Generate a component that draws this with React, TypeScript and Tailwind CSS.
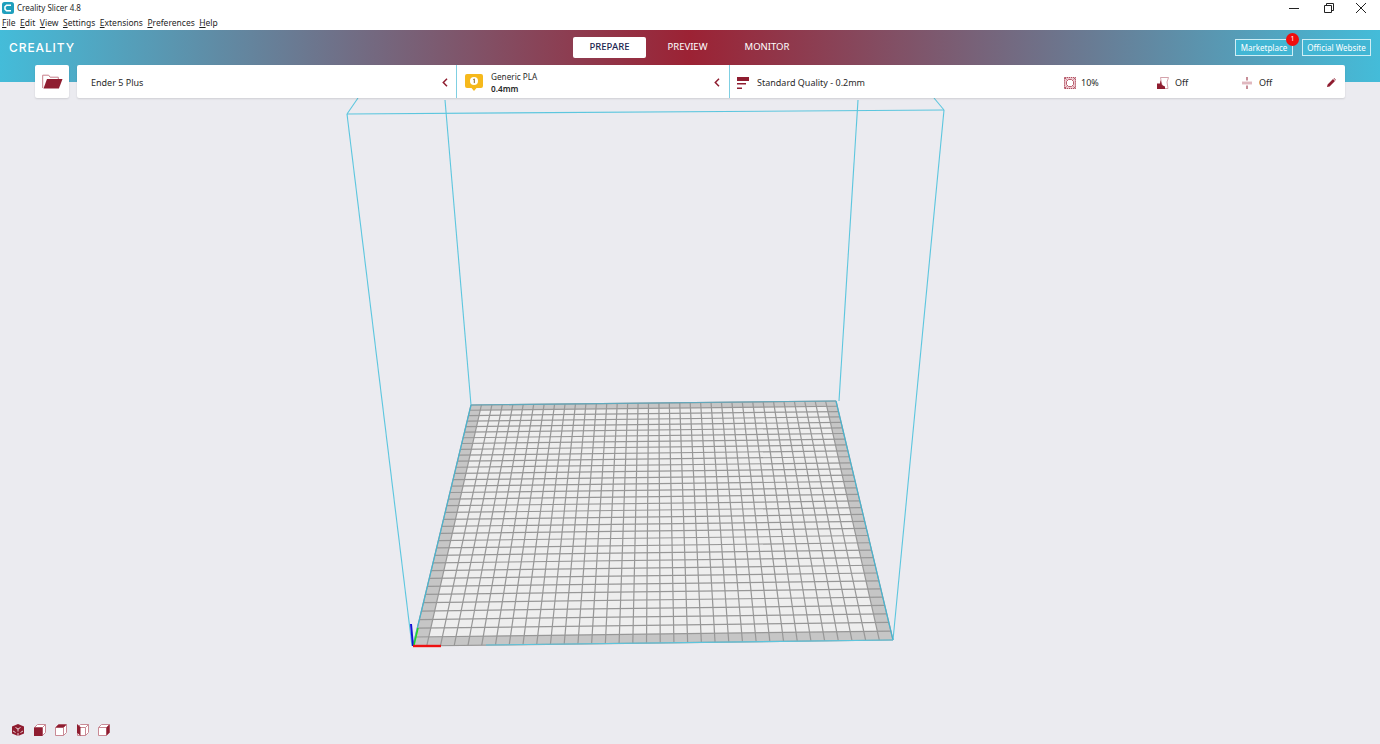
import { Fragment } from 'react'

const ACCENT = '#8f1d30'
const WIRE = '#5cc6de'

type Pt = [number, number]

// projective map of the unit square on to the build plate
const corners: Pt[] = [[471, 405], [836, 401], [893, 640], [413, 646]]

function plateMap([p0, p1, p2, p3]: Pt[]) {
  const dx1 = p1[0] - p2[0]
  const dx2 = p3[0] - p2[0]
  const dx3 = p0[0] - p1[0] + p2[0] - p3[0]
  const dy1 = p1[1] - p2[1]
  const dy2 = p3[1] - p2[1]
  const dy3 = p0[1] - p1[1] + p2[1] - p3[1]
  const det = dx1 * dy2 - dx2 * dy1
  const g = (dx3 * dy2 - dx2 * dy3) / det
  const h = (dx1 * dy3 - dx3 * dy1) / det
  const a = p1[0] - p0[0] + g * p1[0]
  const b = p3[0] - p0[0] + h * p3[0]
  const d = p1[1] - p0[1] + g * p1[1]
  const e = p3[1] - p0[1] + h * p3[1]
  return (u: number, v: number): Pt => {
    const w = g * u + h * v + 1
    return [(a * u + b * v + p0[0]) / w, (d * u + e * v + p0[1]) / w]
  }
}

const N = 35
const at = plateMap(corners)
const poly = (pts: Pt[]) => pts.map((p) => p.join(',')).join(' ')

function BuildVolume() {
  const s = 1 / N
  const inner = [at(s, s), at(1 - s, s), at(1 - s, 1 - s), at(s, 1 - s)]
  const ticks = Array.from({ length: N + 1 }, (_, i) => i / N)
  return (
    <svg className="absolute left-0 top-0" width="1380" height="744" viewBox="0 0 1380 744">
      <polygon points={poly(corners)} fill="#c6c6c6" />
      <polygon points={poly(inner)} fill="#eeeeee" />
      {ticks.map((t, i) => {
        const a = at(t, 0)
        const b = at(t, 1)
        const c = at(0, t)
        const d = at(1, t)
        return (
          <Fragment key={i}>
            <line x1={a[0]} y1={a[1]} x2={b[0]} y2={b[1]} stroke="#979797" strokeWidth="1.2" />
            <line x1={c[0]} y1={c[1]} x2={d[0]} y2={d[1]} stroke="#979797" strokeWidth="1.2" />
          </Fragment>
        )
      })}
      {/* wireframe */}
      <g stroke={WIRE} strokeWidth="1.1" fill="none">
        <line x1="412" y1="646" x2="347" y2="114" />
        <line x1="893" y1="640" x2="944" y2="110" />
        <line x1="471" y1="405" x2="445" y2="100" />
        <line x1="839" y1="401" x2="858" y2="100" />
        <line x1="347" y1="114" x2="944" y2="110" />
        <line x1="347" y1="114" x2="358" y2="98" />
        <line x1="944" y1="110" x2="934" y2="98" />
        <line x1="413" y1="646" x2="471" y2="405" stroke="#45b6d2" />
        <line x1="893" y1="640" x2="836" y2="401" stroke="#45b6d2" />
        <line x1="471" y1="405" x2="836" y2="401" stroke="#5fa9bd" />
        <line x1="486" y1="645" x2="893" y2="640" stroke="#5cc5dd" />
      </g>
      {/* axes */}
      <line x1="413" y1="646" x2="411" y2="624" stroke="#1414d8" strokeWidth="2" />
      <line x1="414" y1="645" x2="418" y2="628" stroke="#22d822" strokeWidth="1.5" />
      <line x1="413" y1="646" x2="441" y2="646" stroke="#ee1111" strokeWidth="2.4" />
    </svg>
  )
}

function AppIcon() {
  return (
    <svg width="12" height="12" viewBox="0 0 12 12">
      <rect width="12" height="12" rx="2.5" fill="#1f9fbd" />
      <path d="M9 3.2H4.6L3 4.8v2.4l1.6 1.6H9" fill="none" stroke="#fff" strokeWidth="1.6" />
    </svg>
  )
}

function WindowControls() {
  return (
    <div className="flex items-center">
      <svg width="12" height="12" viewBox="0 0 12 12" className="mr-[23px]">
        <path d="M1 6.5h10" stroke="#222" />
      </svg>
      <svg width="12" height="12" viewBox="0 0 12 12" className="mr-[20px]">
        <path d="M3.5 3V1.5h7v7H9M1.5 3.5h7v7h-7z" fill="none" stroke="#222" />
      </svg>
      <svg width="12" height="12" viewBox="0 0 12 12" className="mr-[13px]">
        <path d="M1 1l10 10M11 1L1 11" stroke="#222" />
      </svg>
    </div>
  )
}

function MenuItem({ first, rest }: { first: string; rest: string }) {
  return (
    <span>
      <span className="underline">{first}</span>
      {rest}
    </span>
  )
}

function Chevron() {
  return (
    <svg width="6" height="9" viewBox="0 0 6 9">
      <path d="M5 .8L1.3 4.5 5 8.2" fill="none" stroke={ACCENT} strokeWidth="1.5" />
    </svg>
  )
}

function FolderIcon() {
  return (
    <svg width="21" height="15" viewBox="0 0 21 15">
      <path d="M.7 14V1.2h6l1.4 2h8.2v2" fill="none" stroke="#c77f8b" strokeWidth="1" />
      <path d="M1.5 14.5L5 5h15.5l-3.6 9.5z" fill={ACCENT} />
    </svg>
  )
}

function MaterialWarning() {
  return (
    <svg width="18" height="18" viewBox="0 0 18 18">
      <path d="M2 0h14a2 2 0 012 2v10a2 2 0 01-2 2h-4.500L9 17l-2.500-3H2a2 2 0 01-2-2V2a2 2 0 012-2z" fill="#f6b91c" />
      <circle cx="9" cy="7" r="4" fill="#fff" />
      <path d="M8.300 5.500l1-.6v4.200" fill="none" stroke="#7a5a10" strokeWidth=".9" />
    </svg>
  )
}

function ProfileIcon() {
  return (
    <svg width="12" height="12" viewBox="0 0 12 12">
      <path d="M0 0h12v4H0zM0 6h9v1.500H0zM0 10.500h5V12H0z" fill={ACCENT} />
    </svg>
  )
}

function InfillIcon() {
  return (
    <svg width="12" height="12" viewBox="0 0 12 12">
      <rect x=".5" y=".5" width="11" height="11" fill="#eec9d0" stroke="#b04f60" strokeDasharray="1.4 .7" />
      <path d="M2.500 4.500L4.500 2.500h3l2 2v3l-2 2h-3l-2-2z" fill="#fff" stroke="#b04f60" strokeWidth=".9" />
      <path d="M.5.5l2 2M11.500.5l-2 2M.5 11.500l2-2M11.500 11.500l-2-2" stroke="#b04f60" strokeWidth=".9" />
    </svg>
  )
}

function SupportIcon() {
  return (
    <svg width="12" height="12" viewBox="0 0 12 12">
      <path d="M3.500.5h8L10 5l1 6.500H6L4.500 6z" fill="#fff" stroke="#c98a95" strokeWidth=".8" />
      <path d="M0 6.500h3L3.500 3l1.500 5 3 1.500V12H0z" fill={ACCENT} />
    </svg>
  )
}

function AdhesionIcon() {
  return (
    <svg width="10" height="12" viewBox="0 0 10 12">
      <path d="M0 5.200h10M0 6.800h10" stroke="#c77f8b" strokeWidth=".8" />
      <path d="M5 0v3.500M5 8.500V12" stroke={ACCENT} />
    </svg>
  )
}

function PencilIcon() {
  return (
    <svg width="9" height="9" viewBox="0 0 9 9">
      <path d="M0 9l.6-2.600L6 1l2 2-5.400 5.400zM6.600.4l.5-.4L9 1.900l-.4.500z" fill={ACCENT} />
    </svg>
  )
}

// which face of the cube is filled; 'all' is the home view
function ViewCube({ face }: { face: 'all' | 'front' | 'top' | 'left' | 'right' }) {
  if (face === 'all') {
    return (
      <svg width="12" height="12" viewBox="0 0 12 12">
        <path d="M6 0l6 2.500v7L6 12l-6-2.500v-7z" fill={ACCENT} />
        <path d="M3.500 3.500L6 5l2.500-1.500M6 5v2.500M1 7l2.500 1.500M11 7L8.500 8.500M6 9v3" stroke="#fff" strokeWidth=".8" fill="none" />
      </svg>
    )
  }
  const line = '#c98a95'
  return (
    <svg width="12" height="12" viewBox="0 0 12 12">
      <path d="M.5 3.500L3.500.5h8v8l-3 3h-8z" fill="#fff" stroke={line} />
      <path d="M.5 3.500h8v8M8.500 3.500l3-3" fill="none" stroke={line} />
      {face === 'front' && <path d="M0 3.500h8.500V12H0z" fill={ACCENT} />}
      {face === 'top' && <path d="M.5 3.500L3.500.5h8l-3 3z" fill={ACCENT} />}
      {face === 'left' && <path d="M0 0l3.500 3V12L0 8.500z" fill={ACCENT} />}
      {face === 'right' && <path d="M8.500 3.500l3-3v8l-3 3z" fill={ACCENT} />}
    </svg>
  )
}

export default function App() {
  return (
    <div className="relative flex h-[744px] w-[1380px] flex-col overflow-hidden bg-[#ebebf0] font-['Noto_Sans',sans-serif] text-[#1f1f1f]">
      <BuildVolume />

      {/* Title bar */}
      <div className="relative z-10 flex h-[15px] items-center justify-between bg-white pl-[2px]">
        <div className="flex items-center gap-[3px] text-[8px]">
          <AppIcon />
          <span>Creality Slicer 4.8</span>
        </div>
        <WindowControls />
      </div>

      {/* Menu bar */}
      <div className="relative z-10 flex h-[15px] items-center gap-[4.500px] bg-white pl-[2px] pt-[2px] text-[8.500px]">
        <MenuItem first="F" rest="ile" />
        <MenuItem first="E" rest="dit" />
        <MenuItem first="V" rest="iew" />
        <MenuItem first="S" rest="ettings" />
        <MenuItem first="E" rest="xtensions" />
        <MenuItem first="P" rest="references" />
        <MenuItem first="H" rest="elp" />
      </div>

      {/* Header */}
      <div className="relative z-10 h-[52px] bg-[linear-gradient(90deg,#44bcd9_0%,#9c2234_50%,#44bcd9_100%)]">
        <div className="flex h-[35px] items-center pl-[9px] pr-[9px]">
          <div className="w-[564px] font-['Inter',sans-serif] text-[12px] font-medium tracking-[0.9px] text-white">CREALITY</div>
          <div className="flex items-center text-[9.500px] text-white">
            <div className="flex h-[21px] w-[73px] items-center justify-center rounded-[2px] bg-white font-medium text-[#1b2450]">PREPARE</div>
            <div className="w-[83px] text-center">PREVIEW</div>
            <div className="w-[76px] text-center">MONITOR</div>
          </div>
          <div className="ml-auto flex items-center gap-[9px] text-[8px] text-white">
            <div className="relative flex h-[17px] w-[58px] items-center justify-center border border-[#cfeef5] bg-[#42b6d4]">
              Marketplace
              <span className="absolute -right-[7px] -top-[7px] flex h-[13px] w-[13px] items-center justify-center rounded-full bg-[#f00d0d] text-[7px]">1</span>
            </div>
            <div className="flex h-[17px] w-[69px] items-center justify-center border border-[#cfeef5] bg-[#42b6d4]">Official Website</div>
          </div>
        </div>
      </div>

      {/* Toolbar, sits half over the header */}
      <div className="relative z-10 -mt-[17px] flex h-[33px] gap-[8px] pl-[35px] text-[#2a2a2a]">
        <div className="flex w-[34px] items-center justify-center rounded-[2px] bg-white shadow-[0_1px_2px_rgba(0,0,0,0.12)]">
          <FolderIcon />
        </div>
        <div className="flex w-[1268px] rounded-[2px] bg-white text-[9px] shadow-[0_1px_2px_rgba(0,0,0,0.12)]">
          <div className="flex w-[380px] items-center justify-between border-r border-[#7fcfe2] pl-[14px] pr-[8px] pt-[2px]">
            <span>Ender 5 Plus</span>
            <Chevron />
          </div>
          <div className="flex w-[273px] items-center border-r border-[#7fcfe2] pl-[8px] pr-[9px] pt-[2px]">
            <MaterialWarning />
            <div className="ml-[8px] flex flex-col text-[8.200px] leading-[12px]">
              <span>Generic PLA</span>
              <span className="font-semibold">0.4mm</span>
            </div>
            <div className="ml-auto flex">
              <Chevron />
            </div>
          </div>
          <div className="flex flex-1 items-center pl-[7px] pr-[9px] pt-[2px]">
            <ProfileIcon />
            <span className="ml-[8px] w-[307px]">Standard Quality - 0.2mm</span>
            <div className="flex w-[93px] items-center gap-[5px]">
              <InfillIcon />
              <span>10%</span>
            </div>
            <div className="flex w-[85px] items-center gap-[6px]">
              <SupportIcon />
              <span>Off</span>
            </div>
            <div className="flex items-center gap-[7px]">
              <AdhesionIcon />
              <span>Off</span>
            </div>
            <div className="ml-auto flex">
              <PencilIcon />
            </div>
          </div>
        </div>
      </div>

      {/* View orientation buttons */}
      <div className="relative z-10 mt-auto flex gap-[9.500px] pb-[8px] pl-[12px]">
        <ViewCube face="all" />
        <ViewCube face="front" />
        <ViewCube face="top" />
        <ViewCube face="left" />
        <ViewCube face="right" />
      </div>
    </div>
  )
}
